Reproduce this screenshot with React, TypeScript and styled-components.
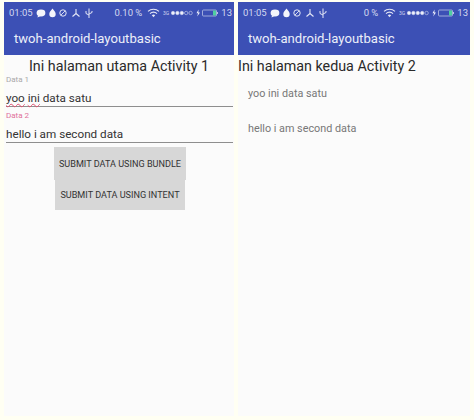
import React from 'react';
import styled, { createGlobalStyle } from 'styled-components';

const GlobalStyle = createGlobalStyle`
  html, body {
    margin: 0;
    padding: 0;
    background: #fffff3;
  }
  body {
    font-family: Roboto, "Liberation Sans", sans-serif;
  }
`;

const Page = styled.div`
  width: 474px;
  height: 420px;
  box-sizing: border-box;
  padding: 2px 4px 4px 4px;
  display: flex;
  gap: 4px;
  overflow: hidden;
`;

const Phone = styled.div`
  width: 232px;
  flex: none;
  display: flex;
  flex-direction: column;
  background: #fbfbfb;

  &:first-child {
    width: 230px;
  }
`;

const AppBar = styled.div`
  height: 53px;
  flex: none;
  box-sizing: border-box;
  background: #3c50b5;
  color: #e9ecf8;
`;

const StatusBar = styled.div`
  height: 17px;
  padding: 2px 2px 0 5px;
  display: flex;
  align-items: center;
  font-size: 9.5px;
  color: #d5daf0;
`;

const StatusGroup = styled.div`
  display: flex;
  align-items: center;
  gap: 3px;
`;

const Speed = styled.span`
  margin-left: auto;
  margin-right: 5px;
  font-size: 9.5px;
`;

const Title = styled.div`
  margin: 9px 0 0 10px;
  font-size: 13.1px;
  line-height: 18px;
  color: #eceff9;
`;

const Body = styled.div<{ $center?: boolean }>`
  flex: 1;
  display: flex;
  flex-direction: column;
  align-items: ${(p) => (p.$center ? 'stretch' : 'flex-start')};
`;

const Heading = styled.div<{ $center?: boolean }>`
  margin-top: 3px;
  font-size: 14.3px;
  line-height: 17px;
  color: #2a2a2a;
  text-align: ${(p) => (p.$center ? 'center' : 'left')};
`;

const Field = styled.div`
  margin: 0 1px 4px 2px;
  display: flex;
  flex-direction: column;
`;

const FieldLabel = styled.div<{ $active?: boolean }>`
  font-size: 8px;
  line-height: 10px;
  height: 10px;
  color: ${(p) => (p.$active ? '#e0709a' : '#a9a9a9')};
`;

const FieldValue = styled.div`
  height: 22px;
  padding-top: 5px;
  box-sizing: border-box;
  font-size: 11.7px;
  line-height: 16px;
  color: #333;
  border-bottom: 1px solid #8e8e8e;
`;

const Misspelled = styled.span`
  text-decoration: underline wavy #e0506f 1px;
  text-decoration-skip-ink: none;
  text-underline-offset: 1px;
`;

const Buttons = styled.div`
  padding-left: 2px;
  display: flex;
  flex-direction: column;
  align-items: center;
`;

const SubmitButton = styled.div<{ $width: number; $height: number }>`
  width: ${(p) => p.$width}px;
  height: ${(p) => p.$height}px;
  display: flex;
  align-items: center;
  justify-content: center;
  background: #d7d7d7;
  color: #333;
  font-size: 9.1px;
  white-space: nowrap;
`;

const Output = styled.div<{ $top: number }>`
  margin: ${(p) => p.$top}px 0 0 10px;
  font-size: 10.8px;
  line-height: 16px;
  color: #777;
`;

const Icons = () => (
  <svg width="58" height="12" viewBox="0 0 58 12" fill="none" stroke="#e4e7f6">
    <ellipse cx="5" cy="6" rx="4.4" ry="3.4" fill="#f4f5fb" stroke="none" />
    <path d="M2 8.5 1.5 10.5 4.5 9" fill="#f4f5fb" stroke="none" />
    <path d="M16.5 1.5c2 2.5 3.2 3.8 3.2 5.6a3.2 3.2 0 0 1-6.4 0c0-1.8 1.2-3.1 3.2-5.6z" fill="#f4f5fb" stroke="none" />
    <circle cx="27" cy="6" r="3.2" strokeWidth="1" />
    <path d="M25 8 29 4" strokeWidth="0.9" />
    <path d="M40 2v4.5M40 6.5 36.5 9.5M40 6.5 43.5 9.5" strokeWidth="1.1" />
    <path d="M53 1.5v9.5M50 4v2.5l3 1.5M56 4v1.5l-3 1.5" strokeWidth="1" />
  </svg>
);

const Wifi = () => (
  <svg width="13" height="10" viewBox="0 0 13 10" fill="none" stroke="#e4e7f6" strokeWidth="1.1">
    <path d="M1 3.4a8 8 0 0 1 11 0M3 5.6a5 5 0 0 1 7 0" />
    <path d="M4.8 7.3a2.5 2.5 0 0 1 3.4 0L6.5 9.2z" fill="#e4e7f6" stroke="none" />
  </svg>
);

const Signal = ({ filled }: { filled: number }) => (
  <svg width="30" height="8" viewBox="0 0 30 8">
    <text x="0" y="6" fontSize="5" fill="#cfd5ef" fontFamily="Roboto, sans-serif">3G</text>
    {[0, 1, 2, 3, 4].map((i) => (
      <circle
        key={i}
        cx={10 + i * 4.4}
        cy="4"
        r="1.7"
        fill={i < filled ? '#eef0fa' : 'none'}
        stroke="#cfd5ef"
        strokeWidth="0.6"
      />
    ))}
  </svg>
);

const Battery = () => (
  <svg width="22" height="8" viewBox="0 0 22 8">
    <path d="M2.5 0.5 0.5 4.2h1.6L1.2 7.5 4 3.4H2.4z" fill="#eef0fa" />
    <rect x="6.5" y="1" width="14" height="6" rx="1" fill="none" stroke="#b8c1e6" strokeWidth="0.8" />
    <rect x="17" y="1.5" width="3" height="5" fill="#4fd0a0" />
    <rect x="20.8" y="3" width="1.2" height="2" fill="#b8c1e6" />
  </svg>
);

function Status({ speed, filled }: { speed: string; filled: number }) {
  return (
    <StatusBar>
      <StatusGroup>
        <span>01:05</span>
        <Icons />
      </StatusGroup>
      <Speed>{speed}</Speed>
      <StatusGroup>
        <Wifi />
        <Signal filled={filled} />
        <Battery />
        <span>13</span>
      </StatusGroup>
    </StatusBar>
  );
}

export default function App() {
  return (
    <>
      <GlobalStyle />
      <Page>
        <Phone>
          <AppBar>
            <Status speed="0.10 %" filled={3} />
            <Title>twoh-android-layoutbasic</Title>
          </AppBar>
          <Body $center>
            <Heading $center>Ini halaman utama Activity 1</Heading>
            <Field>
              <FieldLabel>Data 1</FieldLabel>
              <FieldValue>
                <Misspelled>yoo</Misspelled> <Misspelled>ini</Misspelled> data satu
              </FieldValue>
            </Field>
            <Field>
              <FieldLabel $active>Data 2</FieldLabel>
              <FieldValue>hello i am second data</FieldValue>
            </Field>
            <Buttons>
              <SubmitButton $width={132} $height={33}>SUBMIT DATA USING BUNDLE</SubmitButton>
              <SubmitButton $width={130} $height={30}>SUBMIT DATA USING INTENT</SubmitButton>
            </Buttons>
          </Body>
        </Phone>
        <Phone>
          <AppBar>
            <Status speed="0 %" filled={4} />
            <Title>twoh-android-layoutbasic</Title>
          </AppBar>
          <Body>
            <Heading>Ini halaman kedua Activity 2</Heading>
            <Output $top={11}>yoo ini data satu</Output>
            <Output $top={19}>hello i am second data</Output>
          </Body>
        </Phone>
      </Page>
    </>
  );
}
